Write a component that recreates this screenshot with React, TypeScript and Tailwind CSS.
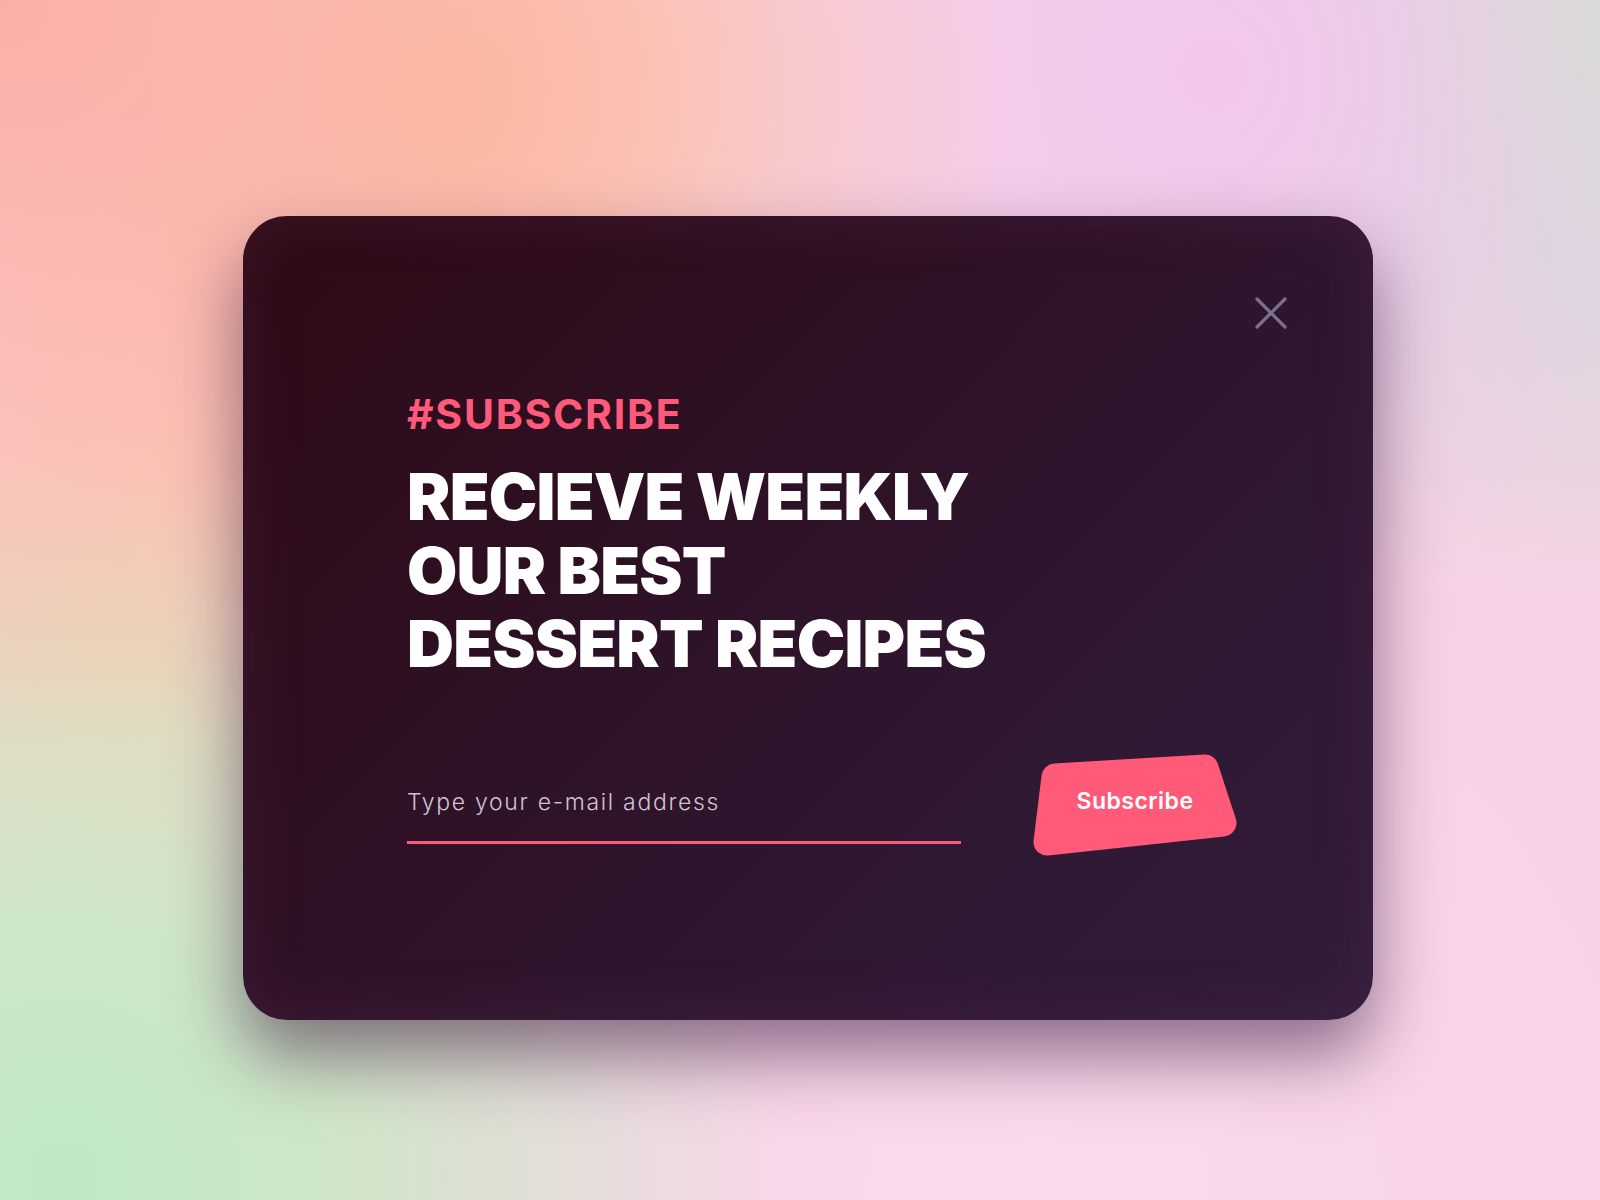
import React from 'react';

function CloseIcon() {
  return (
    <svg width="32" height="32" viewBox="0 0 32 32" fill="none">
      <path d="M2 2L30 30M30 2L2 30" stroke="#7a7192" strokeWidth="3.2" strokeLinecap="round" />
    </svg>
  );
}

function SubscribeButton() {
  return (
    <button className="relative w-[212px] h-[108px] shrink-0">
      {/* skewed pill shape, corners rounded by the thick stroke */}
      <svg className="absolute inset-0" width="212" height="108" viewBox="0 0 212 108">
        <polygon
          points="25,25 175,16 193,71 17,90"
          fill="#ff5a78"
          stroke="#ff5a78"
          strokeWidth="27"
          strokeLinejoin="round"
        />
      </svg>
      <span className="absolute inset-0 flex items-center justify-center pr-[2px] pb-[8px] text-[23px] font-semibold tracking-[0.02em] text-white font-['Inter',sans-serif]">
        Subscribe
      </span>
    </button>
  );
}

export default function App() {
  return (
    <div className="w-full h-[1200px] overflow-hidden pt-[216px] pl-[243px] bg-[#f7d2e6] bg-[radial-gradient(circle_at_0%_0%,#fcaea6_0%,transparent_38%),radial-gradient(circle_at_28%_8%,#fcbc9c_0%,transparent_35%),radial-gradient(circle_at_76%_6%,#f3c6ec_0%,transparent_32%),radial-gradient(circle_at_99%_2%,#cfe0d0_0%,#d8d8dc_12%,transparent_30%),radial-gradient(circle_at_4%_98%,#bfe8c4_0%,#cfe6c8_14%,transparent_38%),radial-gradient(circle_at_8%_55%,#fbcdb2_0%,transparent_35%),radial-gradient(circle_at_65%_100%,#fadaee_0%,transparent_45%)] font-['Inter',sans-serif]">
      <div className="relative w-[1130px] h-[804px] rounded-[44px] bg-[linear-gradient(135deg,#2e0a15_0%,#2e1126_40%,#2f1832_70%,#311c3a_100%)] shadow-[0_36px_70px_rgba(55,22,58,0.55),inset_0_0_60px_rgba(120,60,105,0.22)] pl-[164px] pt-[178px]">
        <button className="absolute top-[81px] right-[86px]">
          <CloseIcon />
        </button>

        <p className="text-[41px] leading-[41px] font-bold text-[#ff5a7a] tracking-[0.042em]">#SUBSCRIBE</p>

        <h1 className="mt-[25px] text-[65px] leading-[73.5px] font-black text-white tracking-[-0.012em]">
          RECIEVE WEEKLY
          <br />
          OUR BEST
          <br />
          DESSERT RECIPES
        </h1>

        <div className="mt-[71px] flex items-start gap-[69px]">
          <div className="mt-[30px] w-[554px] pb-[19px] border-b-[3px] border-[#ff5a7a]">
            <input
              type="email"
              placeholder="Type your e-mail address"
              className="w-full h-[40px] bg-transparent outline-none text-[23px] font-light tracking-[0.073em] text-[#e9dde9] placeholder:text-[#d0c3d2]"
            />
          </div>
          <SubscribeButton />
        </div>
      </div>
    </div>
  );
}
